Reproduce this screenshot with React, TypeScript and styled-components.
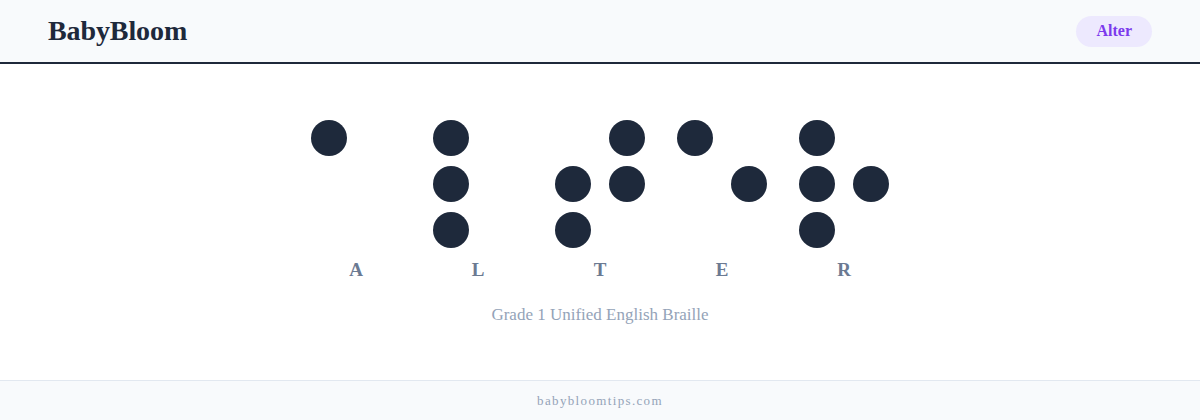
import React from "react";
import styled, { createGlobalStyle } from "styled-components";

const GlobalStyle = createGlobalStyle`
  html, body {
    margin: 0;
    padding: 0;
    background: #ffffff;
  }
  body {
    font-family: "Liberation Serif", "DejaVu Serif", serif;
  }
`;

// dot numbering: 1 2 3 down the left column, 4 5 6 down the right
const BRAILLE: { letter: string; dots: number[] }[] = [
  { letter: "A", dots: [1] },
  { letter: "L", dots: [1, 2, 3] },
  { letter: "T", dots: [2, 3, 4, 5] },
  { letter: "E", dots: [1, 5] },
  { letter: "R", dots: [1, 2, 3, 5] },
];

const Page = styled.div`
  display: flex;
  flex-direction: column;
  min-height: 420px;
`;

const Header = styled.header`
  height: 62px;
  display: flex;
  align-items: center;
  justify-content: space-between;
  padding: 0 48px;
  background: #f8fafc;
  border-bottom: 2px solid #1e293b;
`;

const Logo = styled.div`
  font-size: 28px;
  font-weight: 700;
  color: #1e293b;
  letter-spacing: -0.1px;
`;

const Pill = styled.span`
  display: inline-flex;
  align-items: center;
  height: 31px;
  padding: 0 20px;
  border-radius: 16px;
  background: #ede9fe;
  color: #7c3aed;
  font-size: 16px;
  font-weight: 700;
`;

const Main = styled.main`
  flex: 1;
  display: flex;
  flex-direction: column;
  align-items: center;
  padding-top: 56px;
`;

const Word = styled.div`
  display: flex;
  gap: 32px;
`;

const Cell = styled.div`
  display: flex;
  flex-direction: column;
  align-items: center;
  gap: 11px;
`;

const DotGrid = styled.div`
  display: grid;
  grid-template-columns: repeat(2, 36px);
  grid-template-rows: repeat(3, 36px);
  grid-auto-flow: column;
  column-gap: 18px;
  row-gap: 10px;
`;

const Dot = styled.span<{ $on: boolean }>`
  width: 36px;
  height: 36px;
  border-radius: 50%;
  background: ${(p) => (p.$on ? "#1e293b" : "transparent")};
`;

const Letter = styled.div`
  font-size: 19px;
  line-height: 22px;
  font-weight: 700;
  color: #6b7a92;
`;

const Caption = styled.div`
  margin-top: 24px;
  font-size: 17px;
  color: #94a3b8;
`;

const Footer = styled.footer`
  height: 39px;
  display: flex;
  align-items: center;
  justify-content: center;
  background: #f8fafc;
  border-top: 1px solid #e2e8f0;
  font-size: 13px;
  letter-spacing: 1.35px;
  color: #94a3b8;
`;

export default function App() {
  return (
    <>
      <GlobalStyle />
      <Page>
        <Header>
          <Logo>BabyBloom</Logo>
          <Pill>Alter</Pill>
        </Header>
        <Main>
          <Word>
            {BRAILLE.map((c) => (
              <Cell key={c.letter}>
                <DotGrid>
                  {[1, 2, 3, 4, 5, 6].map((n) => (
                    <Dot key={n} $on={c.dots.includes(n)} />
                  ))}
                </DotGrid>
                <Letter>{c.letter}</Letter>
              </Cell>
            ))}
          </Word>
          <Caption>Grade 1 Unified English Braille</Caption>
        </Main>
        <Footer>babybloomtips.com</Footer>
      </Page>
    </>
  );
}
